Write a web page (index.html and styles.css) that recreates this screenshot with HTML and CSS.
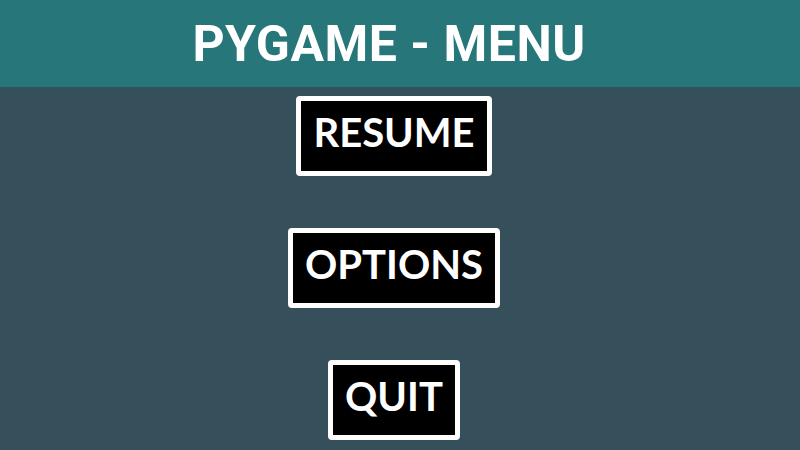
FILE: index.html
```html
<!DOCTYPE html>
<html lang="en">
<head>
    <meta charset="UTF-8">
    <meta name="viewport" content="width=device-width, initial-scale=1.0">
    <title>Pygame - Menu</title>
    <link rel="stylesheet" href="styles.css">
</head>
<body>
    <header>
        <h1>PYGAME - MENU</h1>
    </header>

    <main class="menu">
        <button class="menu-button">RESUME</button>
        <button class="menu-button">OPTIONS</button>
        <button class="menu-button">QUIT</button>
    </main>
</body>
</html>
```

FILE: styles.css
```css
body {
    margin: 0;
    padding: 0;
    background-color: #35505b;
    font-family: Roboto, "Liberation Sans", sans-serif;
    height: 450px;
    overflow: hidden;
}
header {
    background-color: #26767a;
    height: 87px;
    display: flex;
    align-items: center;
    justify-content: center;
    padding-right: 22px;
}
header h1 {
    margin: 0;
    color: white;
    font-size: 50px;
    font-weight: 700;
    letter-spacing: 0.5px;
}
.menu {
    display: flex;
    flex-direction: column;
    align-items: center;
    gap: 52px;
    padding-top: 9px;
    padding-right: 12px;
}
.menu-button {
    height: 80px;
    padding: 0 12px 8px;
    background-color: #000;
    border: 5px solid #fff;
    border-radius: 4px;
    color: #fff;
    font-family: Lato, "Open Sans", sans-serif;
    font-size: 40px;
    font-weight: 700;
    cursor: pointer;
}
```
